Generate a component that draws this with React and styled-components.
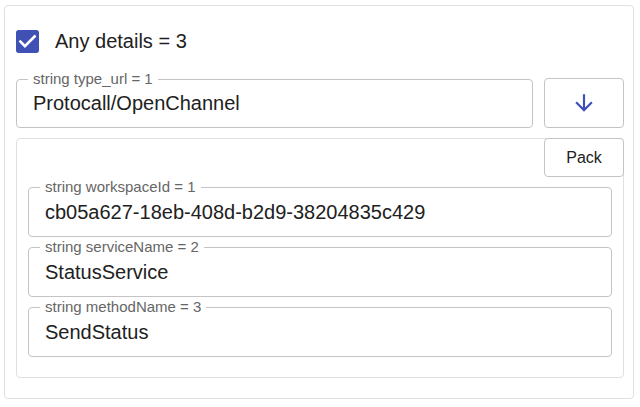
import styled, { createGlobalStyle } from 'styled-components'

const GlobalStyle = createGlobalStyle`
  body {
    margin: 0;
    background: #fff;
    font-family: "Liberation Sans", Arial, sans-serif;
  }
`

const Page = styled.div`
  padding: 5px 0 0 4px;
`
const Card = styled.div`
  width: 630px;
  box-sizing: border-box;
  border: 1px solid #e0e0e0;
  border-radius: 4px;
  padding: 0 9px 20px 11px;
`
const Header = styled.label`
  display: flex;
  align-items: center;
  gap: 16px;
  padding-top: 24px;
  font-size: 20px;
  line-height: 23px;
  color: #212121;
`
const CheckIcon = styled.svg`
  display: block;
  width: 23px;
  height: 23px;
  fill: #3f51b5;
`
const Row = styled.div`
  display: flex;
  align-items: flex-start;
  gap: 11px;
  margin-top: 25px;
`
const Field = styled.div`
  position: relative;
  flex: 1 0 auto;
  box-sizing: border-box;
  height: ${p => p.$h}px;
  margin-top: ${p => p.$offset || 0}px;
  border: 1px solid #c4c4c4;
  border-radius: 4px;
  padding: 0 16px;
  display: flex;
  align-items: center;
`
const FieldLabel = styled.span`
  position: absolute;
  top: -10px;
  left: 11px;
  padding: 0 5px;
  background: #fff;
  font-size: 15px;
  line-height: 18px;
  color: #666;
  white-space: nowrap;
`
const FieldValue = styled.span`
  font-size: 20px;
  color: #212121;
  white-space: nowrap;
`
const Button = styled.button`
  flex: none;
  box-sizing: border-box;
  width: 80px;
  height: ${p => p.$h}px;
  border: 1px solid #c4c4c4;
  border-radius: 4px;
  background: #fff;
  display: flex;
  align-items: center;
  justify-content: center;
  padding: 0;
  font-family: inherit;
  font-size: 16px;
  color: #222;
  cursor: pointer;
`
const PackButton = styled(Button)`
  align-self: flex-end;
  margin: -1px -12px 0 0;
`
const ArrowIcon = styled.svg`
  width: 26px;
  height: 26px;
  fill: #3f51b5;
`
const Details = styled.div`
  margin-top: 10px;
  border: 1px solid #e0e0e0;
  border-radius: 4px;
  padding: 0 11px 20px;
  display: flex;
  flex-direction: column;
`
const FieldList = styled.div`
  display: flex;
  flex-direction: column;
  gap: 10px;
  margin-top: 10px;
`

const TextField = ({ label, value, h = 50, offset }) => (
  <Field $h={h} $offset={offset}>
    <FieldLabel>{label}</FieldLabel>
    <FieldValue>{value}</FieldValue>
  </Field>
)

const fields = [
  { label: 'string workspaceId = 1', value: 'cb05a627-18eb-408d-b2d9-38204835c429' },
  { label: 'string serviceName = 2', value: 'StatusService' },
  { label: 'string methodName = 3', value: 'SendStatus' },
]

const App = () => {
  return (
    <Page>
      <GlobalStyle />
      <Card>
        <Header>
          <CheckIcon viewBox="3 3 18 18">
            <path d="M19 3H5c-1.11 0-2 .9-2 2v14c0 1.1.89 2 2 2h14c1.11 0 2-.9 2-2V5c0-1.1-.89-2-2-2zm-9 14l-5-5 1.41-1.41L10 14.17l7.59-7.59L19 8l-9 9z" />
          </CheckIcon>
          Any details = 3
        </Header>
        <Row>
          <TextField label="string type_url = 1" value="Protocall/OpenChannel" h={49} offset={1} />
          <Button $h={50}>
            <ArrowIcon viewBox="0 0 24 24">
              <path d="M20 12l-1.41-1.41L13 16.17V4h-2v12.17l-5.58-5.59L4 12l8 8 8-8z" />
            </ArrowIcon>
          </Button>
        </Row>
        <Details>
          <PackButton $h={39}>Pack</PackButton>
          <FieldList>
            {fields.map(f => (
              <TextField key={f.label} label={f.label} value={f.value} />
            ))}
          </FieldList>
        </Details>
      </Card>
    </Page>
  )
}

export default App
